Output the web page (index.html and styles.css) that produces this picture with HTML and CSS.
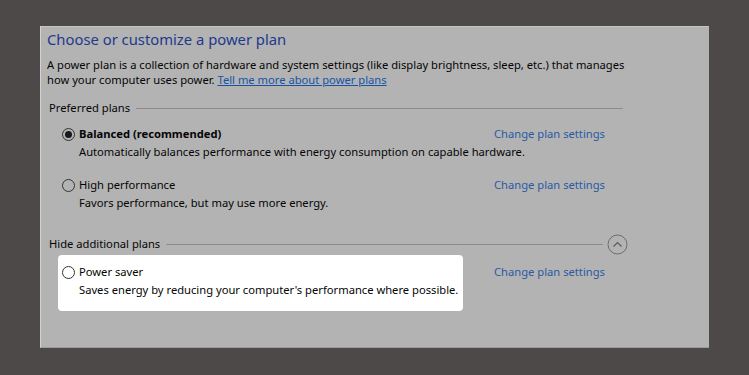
FILE: index.html
```html
<!DOCTYPE html>
<html>
<head>
<meta charset="utf-8">
<link rel="stylesheet" href="styles.css">
</head>
<body>
<div class="panel">
  <h1 class="title">Choose or customize a power plan</h1>
  <p class="intro">A power plan is a collection of hardware and system settings (like display brightness, sleep, etc.) that manages<br>how your computer uses power. <a class="more" href="#">Tell me more about power plans</a></p>

  <div class="group-head"><span class="group-label">Preferred plans</span><span class="rule"></span></div>

  <div class="plan-row">
    <div class="plan">
      <div class="plan-name"><span class="radio checked"></span><span class="name bold">Balanced (recommended)</span></div>
      <div class="plan-desc">Automatically balances performance with energy consumption on capable hardware.</div>
    </div>
    <a class="change" href="#">Change plan settings</a>
  </div>

  <div class="plan-row">
    <div class="plan">
      <div class="plan-name"><span class="radio"></span><span class="name">High performance</span></div>
      <div class="plan-desc">Favors performance, but may use more energy.</div>
    </div>
    <a class="change" href="#">Change plan settings</a>
  </div>

  <div class="group-head hide-head"><span class="group-label">Hide additional plans</span><span class="rule short"></span>
    <span class="toggle"><svg width="21" height="21" viewBox="0 0 21 21"><circle cx="10.5" cy="10.5" r="9.5" fill="none" stroke="#6e6e6e" stroke-width="1"/><path d="M6.5 12.5 L10.5 8.5 L14.5 12.5" fill="none" stroke="#5a5a5a" stroke-width="1.2"/></svg></span>
  </div>

  <div class="plan-row">
    <div class="plan highlight">
      <div class="plan-name"><span class="radio white"></span><span class="name">Power saver</span></div>
      <div class="plan-desc">Saves energy by reducing your computer's performance where possible.</div>
    </div>
    <a class="change" href="#">Change plan settings</a>
  </div>
</div>
</body>
</html>
```

FILE: styles.css
```css
html, body {
  margin: 0;
  padding: 0;
}
body {
  background: #4d4948;
  width: 749px;
  height: 375px;
  overflow: hidden;
  padding-top: 26px;
  padding-left: 40px;
  box-sizing: border-box;
  font-family: "Noto Sans", "Open Sans", sans-serif;
  font-size: 11.2px;
  color: #050505;
}
.panel {
  width: 669px;
  height: 322px;
  box-sizing: border-box;
  background: #b3b3b3;
  border-top: 1px solid #c4c4c4;
  border-left: 1px solid #d2d2d2;
  border-bottom: 1px solid #9c9c9c;
  padding-left: 6px;
}
.title {
  margin: 0;
  padding-top: 1px;
  font-weight: normal;
  font-size: 14.8px;
  line-height: 22px;
  color: #1e3a8c;
}
.intro {
  margin: 7px 0 0 0;
  line-height: 15px;
}
.more {
  color: #1553a8;
  text-decoration: underline;
}
.group-head {
  display: flex;
  align-items: center;
  margin-top: 13px;
  margin-left: 2px;
  height: 16px;
  width: 574px;
}
.group-label {
  line-height: 16px;
  white-space: nowrap;
}
.rule {
  flex: 1;
  height: 1px;
  background: #8c8c8c;
  margin-left: 6px;
}
.hide-head {
  margin-top: 16px;
  width: 579px;
}
.rule.short {
  margin-left: 6px;
}
.toggle {
  display: flex;
  margin-left: 4px;
  margin-top: 1px;
}
.plan-row {
  display: flex;
  align-items: flex-start;
  margin-top: 0;
}
.group-head + .plan-row {
  margin-top: 2px;
}
.hide-head + .plan-row {
  margin-top: 3px;
}
.plan {
  width: 405px;
  box-sizing: border-box;
  padding: 8px 4px 9px 4px;
  margin-left: 11px;
  border-radius: 4px;
}
.plan.highlight {
  background: #fff;
  padding-top: 9px;
  padding-bottom: 13px;
}
.plan.highlight + .change {
  margin-top: 9px;
}
.plan-name {
  display: flex;
  align-items: center;
  height: 16px;
}
.radio {
  width: 13px;
  height: 13px;
  box-sizing: border-box;
  border: 1px solid #333;
  border-radius: 50%;
  margin-right: 4px;
  position: relative;
  flex: none;
}
.radio.checked::after {
  content: "";
  position: absolute;
  left: 2px;
  top: 2px;
  width: 7px;
  height: 7px;
  border-radius: 50%;
  background: #1a1a1a;
}
.radio.white {
  background: #fff;
}
.name {
  line-height: 16px;
}
.bold {
  font-weight: bold;
}
.plan-desc {
  margin-top: 2px;
  line-height: 16px;
  padding-left: 17px;
  white-space: nowrap;
}
.change {
  margin-left: 31px;
  margin-top: 8px;
  line-height: 16px;
  color: #2a5aa3;
  text-decoration: none;
  white-space: nowrap;
}
```
